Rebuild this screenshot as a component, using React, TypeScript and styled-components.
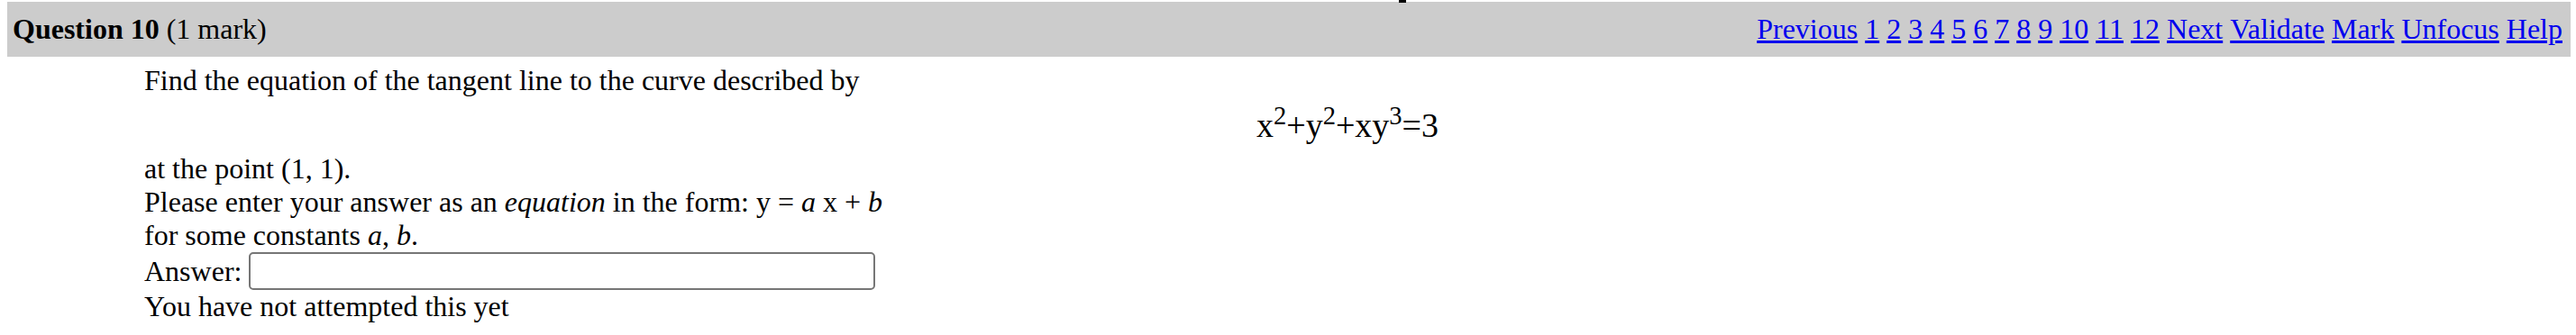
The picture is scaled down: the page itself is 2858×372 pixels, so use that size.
import React from 'react';
import styled, { createGlobalStyle } from 'styled-components';

const GlobalStyle = createGlobalStyle`
  html, body {
    margin: 0;
    padding: 0;
    background: #fff;
  }
  body {
    font-family: "Liberation Serif", "Times New Roman", serif;
    font-size: 32px;
    color: #000;
  }
`;

const Page = styled.div`
  position: relative;
  padding: 2px 6px 0 8px;
`;

const TopMark = styled.span`
  position: absolute;
  left: 1552px;
  top: 0;
  width: 8px;
  height: 3px;
  background: #000;
`;

const QuestionBar = styled.div`
  display: flex;
  align-items: center;
  justify-content: space-between;
  height: 61px;
  padding: 0 9px 0 6px;
  background: #cccccc;
  line-height: 37px;
`;

const Title = styled.div`
  white-space: nowrap;
`;

const Nav = styled.nav`
  display: flex;
  gap: 8px;
  white-space: nowrap;
`;

const NavLink = styled.a`
  color: #0000ee;
  text-decoration: underline;
  cursor: pointer;
`;

const Body = styled.div`
  padding: 8px 22px 0 152px;
  line-height: 37px;
`;

const Line = styled.div``;

const Formula = styled.div`
  text-align: center;
  font-size: 38px;
  line-height: 44px;
  margin: 9px 0 8px;

  sup {
    font-size: 0.75em;
    line-height: 0;
  }
`;

const AnswerRow = styled.div`
  display: flex;
  align-items: center;
  gap: 8px;
  height: 42px;
  margin: 0;
`;

const AnswerInput = styled.input`
  width: 695px;
  height: 42px;
  box-sizing: border-box;
  border: 2px solid #767676;
  border-radius: 5px;
  font: inherit;
  padding: 0 4px;
`;

const navItems = ['Previous', '1', '2', '3', '4', '5', '6', '7', '8', '9', '10', '11', '12', 'Next', 'Validate', 'Mark', 'Unfocus', 'Help'];

export default function App() {
  return (
    <Page>
      <GlobalStyle />
      <TopMark />
      <QuestionBar>
        <Title>
          <b>Question 10</b> (1 mark)
        </Title>
        <Nav>
          {navItems.map((item) => (
            <NavLink key={item}>{item}</NavLink>
          ))}
        </Nav>
      </QuestionBar>
      <Body>
        <Line>Find the equation of the tangent line to the curve described by</Line>
        <Formula>
          x<sup>2</sup>+y<sup>2</sup>+xy<sup>3</sup>=3
        </Formula>
        <Line>at the point (1, 1).</Line>
        <Line>
          Please enter your answer as an <i>equation</i> in the form: y = <i>a</i> x + <i>b</i>
        </Line>
        <Line>
          for some constants <i>a</i>, <i>b</i>.
        </Line>
        <AnswerRow>
          <span>Answer:</span>
          <AnswerInput type="text" />
        </AnswerRow>
        <Line>You have not attempted this yet</Line>
      </Body>
    </Page>
  );
}
